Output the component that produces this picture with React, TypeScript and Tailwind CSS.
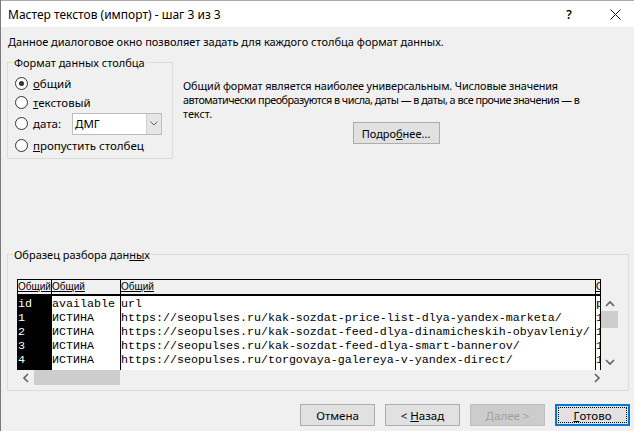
import React from 'react';

const ui = "font-['Noto_Sans','Liberation_Sans',sans-serif]";
const mono = "font-['Liberation_Mono','Courier_New',monospace]";

const cols = [
  { w: 'w-[34px]', body: 'bg-black text-white', rows: ['id', '1', '2', '3', '4'] },
  { w: 'w-[69px]', body: 'bg-white text-black', rows: ['available', 'ИСТИНА', 'ИСТИНА', 'ИСТИНА', 'ИСТИНА'] },
  {
    w: 'w-[475px]',
    body: 'bg-white text-black',
    rows: [
      'url',
      'https://seopulses.ru/kak-sozdat-price-list-dlya-yandex-marketa/',
      'https://seopulses.ru/kak-sozdat-feed-dlya-dinamicheskih-obyavleniy/',
      'https://seopulses.ru/kak-sozdat-feed-dlya-smart-bannerov/',
      'https://seopulses.ru/torgovaya-galereya-v-yandex-direct/',
    ],
  },
  { w: 'w-[5px]', body: 'bg-white text-black', rows: ['price', '1', '1', '1', '1'] },
];

const Chevron = ({ dir }: { dir: 'up' | 'down' | 'left' | 'right' }) => {
  const pts = {
    up: '1,6 5,2 9,6',
    down: '1,2 5,6 9,2',
    left: '6,1 2,5 6,9',
    right: '2,1 6,5 2,9',
  }[dir];
  const vert = dir === 'up' || dir === 'down';
  return (
    <svg width={vert ? 10 : 8} height={vert ? 8 : 10} viewBox={vert ? '0 0 10 8' : '0 0 8 10'}>
      <polyline points={pts} fill="none" stroke="#606060" strokeWidth="1.6" />
    </svg>
  );
};

const Radio = ({ checked, children }: { checked?: boolean; children: React.ReactNode }) => (
  <div className="flex items-center">
    <span className="ml-[7px] w-[13px] h-[13px] rounded-full border border-[#333] bg-white flex items-center justify-center">
      {checked && <span className="w-[5px] h-[5px] rounded-full bg-[#333]" />}
    </span>
    <span className="ml-[5px] text-[11.5px]">{children}</span>
  </div>
);

const Btn = ({ children, cls = '' }: { children: React.ReactNode; cls?: string }) => (
  <div className={`w-[75px] h-[22px] flex items-center justify-center border ${cls}`}>{children}</div>
);

export default function App() {
  return (
    <div className={`w-[634px] h-[431px] overflow-hidden bg-[#f0f0f0] border-l border-[#7a7a7a] text-[11px] leading-[15px] text-black ${ui}`}>
      {/* title bar */}
      <div className="h-[27px] bg-white border-t border-[#aaaaaa] flex items-center text-[12px]">
        <span className="pl-[7px]">Мастер текстов (импорт) - шаг 3 из 3</span>
        <div className="ml-auto w-[46px] flex justify-center font-semibold">?</div>
        <div className="w-[42px] flex justify-center pl-[5px]">
          <svg width="11" height="11" viewBox="0 0 11 11">
            <path d="M0.5 0.5L10.5 10.5M10.5 0.5L0.5 10.5" stroke="#111" strokeWidth="1" />
          </svg>
        </div>
      </div>

      <div className="pl-[6px] pr-[3px]">
        <div className="mt-[7px] pl-[1px]">Данное диалоговое окно позволяет задать для каждого столбца формат данных.</div>

        <div className="flex mt-[6px]">
          <fieldset className="w-[166px] h-[104px] border border-[#dcdcdc]">
            <legend className="ml-[5px] px-[1px]">Формат данных столбца</legend>
            <div className="pt-[4px]">
              <div className="h-[19px] flex items-center">
                <Radio checked>
                  <u>о</u>бщий
                </Radio>
              </div>
              <div className="h-[19px] flex items-center">
                <Radio>
                  <u>т</u>екстовый
                </Radio>
              </div>
              <div className="h-[23px] flex items-center">
                <Radio>
                  <span className="inline-block w-[39px]">
                    <u>д</u>ата:
                  </span>
                </Radio>
                <div className="w-[90px] h-[22px] border border-[#bdbdbd] bg-white flex">
                  <span className="flex-1 pl-[2px] flex items-center text-[11.5px]">ДМГ</span>
                  <span className="w-[15px] bg-[#e5e5e5] border-l border-[#cfcfcf] flex items-center justify-center">
                    <svg width="8" height="5" viewBox="0 0 8 5">
                      <polyline points="0.5,0.5 4,4 7.5,0.5" fill="none" stroke="#606060" strokeWidth="1" />
                    </svg>
                  </span>
                </div>
              </div>
              <div className="h-[21px] flex items-center">
                <Radio>
                  <u>п</u>ропустить столбец
                </Radio>
              </div>
            </div>
          </fieldset>

          <div className="ml-[10px] mt-[24px] w-[444px] flex flex-col">
            <div className="leading-[14px] whitespace-nowrap text-[10.8px]">
              <div className="tracking-[-0.1px]">Общий формат является наиболее универсальным. Числовые значения</div>
              <div className="tracking-[-0.5px]">автоматически преобразуются в числа, даты — в даты, а все прочие значения — в</div>
              <div>текст.</div>
            </div>
            <div className="self-center mr-[18px] mt-[1px] w-[87px] h-[22px] border border-[#adadad] bg-[#e1e1e1] flex items-center justify-center">
              Подро<u>б</u>нее...
            </div>
          </div>
        </div>

        <fieldset className="mt-[88px] w-[622px] h-[144px] border border-[#dcdcdc]">
          <legend className="ml-[5px] px-[1px]">
            Образец разбора дан<u>ны</u>х
          </legend>
          <div className="pt-[17px] pl-[9px]">
            <div className="flex">
              <div className={`flex border-t border-l border-black ${mono} text-[11.67px] leading-[14px]`}>
                {cols.map((c, i) => (
                  <div key={i} className={`${c.w} border-r border-black overflow-hidden`}>
                    <div className="h-[16px] bg-[#f0f0f0] border-b-2 border-black whitespace-nowrap text-[10px] leading-[14px] font-['Liberation_Sans',sans-serif] underline">
                      Общий
                    </div>
                    <div className={`h-[74px] pt-[1px] ${c.body}`}>
                      {c.rows.map((r, j) => (
                        <div key={j} className="h-[14px] whitespace-nowrap">
                          {r}
                        </div>
                      ))}
                    </div>
                  </div>
                ))}
              </div>
              <div className="w-[17px] mt-[17px] h-[74px] flex flex-col">
                <div className="h-[15px] flex items-center justify-center">
                  <Chevron dir="up" />
                </div>
                <div className="h-[17px] bg-[#cdcdcd]" />
                <div className="flex-1" />
                <div className="h-[17px] flex items-center justify-center">
                  <Chevron dir="down" />
                </div>
              </div>
            </div>
            <div className="w-[588px] h-[15px] flex">
              <div className="w-[17px] flex items-center justify-center">
                <Chevron dir="left" />
              </div>
              <div className="w-[86px] bg-[#cdcdcd]" />
              <div className="flex-1" />
              <div className="w-[17px] flex items-center justify-center">
                <Chevron dir="right" />
              </div>
            </div>
          </div>
        </fieldset>

        <div className="mt-[13px] flex justify-end gap-[10px] pr-[1px] text-[11.5px]">
          <Btn cls="border-[#adadad] bg-[#e1e1e1]">Отмена</Btn>
          <Btn cls="border-[#adadad] bg-[#e1e1e1]">
            &lt; <u className="ml-[3px]">Н</u>азад
          </Btn>
          <Btn cls="border-[#bfbfbf] bg-[#cccccc] text-[#a0a0a0]">
            <u>Д</u>алее &gt;
          </Btn>
          <div className="w-[75px] h-[22px] border-2 border-[#0078d7] bg-[#e1e1e1] p-[1px]">
            <div className="w-full h-full border border-dotted border-black flex items-center justify-center">
              <u>Г</u>отово
            </div>
          </div>
        </div>
      </div>
    </div>
  );
}
